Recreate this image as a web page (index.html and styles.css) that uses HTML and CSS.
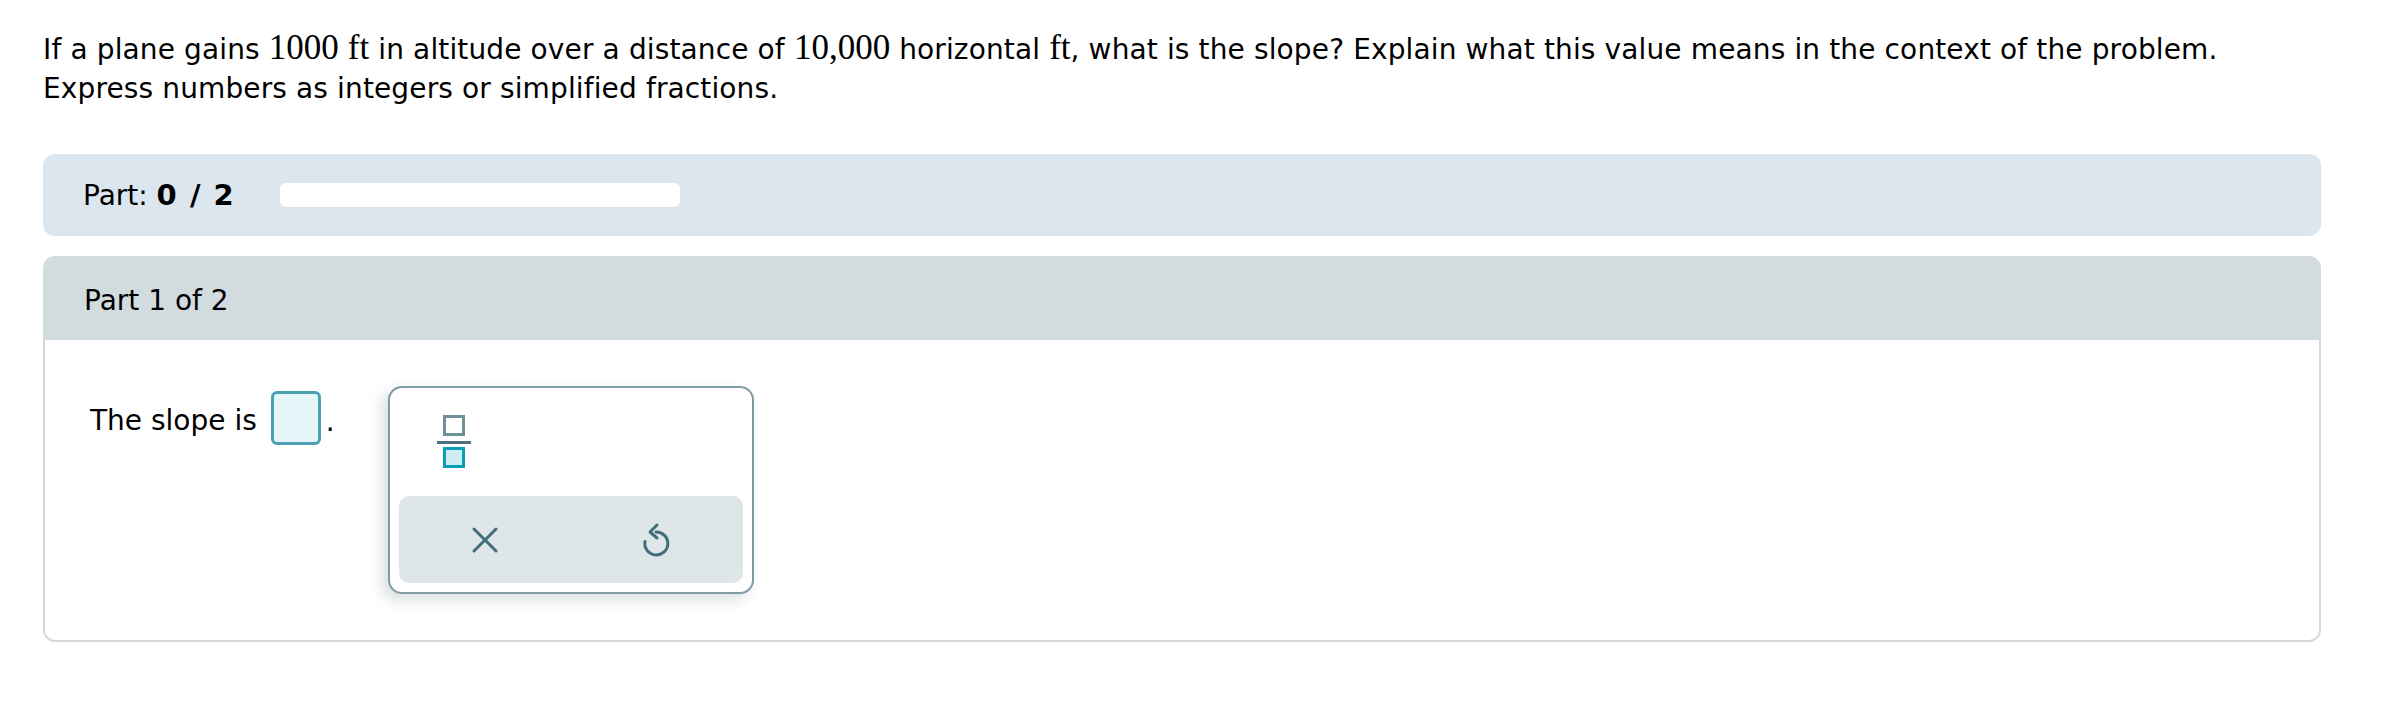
FILE: index.html
```html
<!DOCTYPE html>
<html lang="en">
<head>
<meta charset="utf-8">
<title>Slope question</title>
<link rel="stylesheet" href="styles.css">
</head>
<body>
<div class="page">
  <p class="question">If a plane gains <span class="math">1000</span> <span class="math">ft</span> in altitude over a distance of <span class="math">10,000</span> horizontal <span class="math">ft</span>, what is the slope? Explain what this value means in the context of the problem.<br>Express numbers as integers or simplified fractions.</p>

  <div class="progress">
    <span class="progress-label">Part: <b>0 / 2</b></span>
    <div class="progress-bar"></div>
  </div>

  <div class="card">
    <div class="card-header">Part 1 of 2</div>
    <div class="card-body">
      <div class="answer-row">
        <span class="answer-text">The slope is</span>
        <span class="answer-box"></span>
        <span class="period">.</span>
      </div>

      <div class="palette">
        <div class="palette-top">
          <button class="frac-btn" aria-label="fraction">
            <svg width="34" height="54" viewBox="0 0 34 54">
              <rect x="7.5" y="1.5" width="19" height="18" fill="#ffffff" stroke="#6f8f99" stroke-width="3"/>
              <rect x="0" y="26" width="34" height="3" fill="#4d717b"/>
              <rect x="7.5" y="33.5" width="19" height="18" fill="#cdeef3" stroke="#0a9fb8" stroke-width="3"/>
            </svg>
          </button>
        </div>
        <div class="palette-actions">
          <button class="act-btn" aria-label="clear">
            <svg width="26" height="26" viewBox="0 0 26 26">
              <path d="M2 2 L24 24 M24 2 L2 24" stroke="#3f6d78" stroke-width="3" stroke-linecap="round" fill="none"/>
            </svg>
          </button>
          <button class="act-btn" aria-label="undo">
            <svg width="30" height="36" viewBox="0 0 30 36">
              <path d="M14 10 A11.5 11.5 0 1 1 3 19.5" stroke="#3f6d78" stroke-width="3" stroke-linecap="round" fill="none"/>
              <path d="M15 3 L8 10 L15 16" stroke="#3f6d78" stroke-width="3" stroke-linecap="round" stroke-linejoin="round" fill="none"/>
            </svg>
          </button>
        </div>
      </div>
    </div>
  </div>
</div>
</body>
</html>
```

FILE: styles.css
```css
html, body {
  margin: 0;
  padding: 0;
  background: #ffffff;
}

.page {
  padding: 0 83px 0 43px;
  font-family: "DejaVu Sans", Verdana, sans-serif;
  font-size: 28px;
  color: #000000;
}

.question {
  margin: 0;
  padding-top: 30px;
  line-height: 39px;
  letter-spacing: 0.13px;
}

.math {
  font-family: "Liberation Serif", "Times New Roman", serif;
  font-size: 35px;
  line-height: 0;
  letter-spacing: 0;
}

.progress {
  margin-top: 46px;
  height: 82px;
  background: #dbe6ef;
  border-radius: 12px;
  display: flex;
  align-items: center;
  padding: 0 40px;
  gap: 45px;
}

.progress-label b {
  font-weight: bold;
  font-size: 29px;
  letter-spacing: 1.5px;
}

.progress-bar {
  width: 400px;
  height: 24px;
  background: #ffffff;
  border-radius: 6px;
}

.card {
  margin-top: 20px;
  border: 2px solid #d2dadd;
  border-radius: 12px;
}

.card-header {
  height: 82px;
  background: #d2dbde;
  border-radius: 10px 10px 0 0;
  display: flex;
  align-items: center;
  padding-left: 39px;
  padding-top: 2px;
  box-sizing: border-box;
}

.card-body {
  position: relative;
  padding: 51px 45px 195px;
}

.answer-row {
  display: flex;
  align-items: center;
  height: 54px;
  line-height: 40px;
}

.answer-text {
  padding-top: 5px;
}

.answer-box {
  width: 50px;
  height: 54px;
  box-sizing: border-box;
  border: 3px solid #4aa1b3;
  border-radius: 6px;
  background: #e6f5f8;
  margin-left: 14px;
}

.period {
  margin-left: 5px;
  padding-top: 8px;
}

.palette {
  position: absolute;
  left: 343px;
  top: 46px;
  width: 366px;
  box-sizing: border-box;
  border: 2px solid #7f9ba3;
  border-radius: 14px;
  background: #ffffff;
  padding: 9px;
  box-shadow: -6px 6px 14px rgba(50, 75, 85, 0.18);
}

.palette-top {
  height: 90px;
  margin-bottom: 9px;
  display: flex;
  align-items: center;
  padding-left: 38px;
}

.frac-btn,
.act-btn {
  border: 0;
  background: transparent;
  padding: 0;
  margin: 0;
  display: flex;
  align-items: center;
  justify-content: center;
}

.palette-actions {
  height: 87px;
  background: #dfe6e8;
  border-radius: 10px;
  display: flex;
}

.act-btn {
  flex: 1;
}
```
